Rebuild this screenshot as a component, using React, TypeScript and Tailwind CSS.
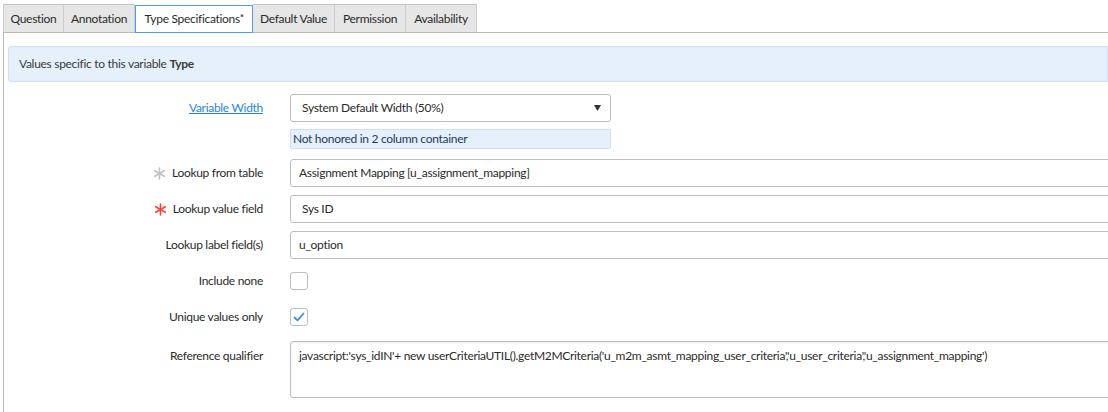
import React from "react";

const Tab = ({ label, w, active }: { label: React.ReactNode; w: string; active?: boolean }) => (
  <div
    className={
      active
        ? `${w} h-[28px] shrink-0 flex items-center justify-center bg-white border border-[#4c9ff0] text-[#2b2b2b] -mb-px relative z-10`
        : `${w} h-[28px] shrink-0 flex items-center justify-center bg-[#e6e6e6] border-r border-[#cccccc] border-t border-t-[#c4c4c4] text-[#2b2b2b]`
    }
  >
    {label}
  </div>
);

const Star = ({ color }: { color: string }) => (
  <svg width="13" height="13" viewBox="0 0 13 13" className="mr-[6px]">
    <g stroke={color} strokeWidth="1.6" strokeLinecap="round">
      <line x1="6.5" y1="1" x2="6.5" y2="12" />
      <line x1="1.7" y1="3.7" x2="11.3" y2="9.3" />
      <line x1="1.7" y1="9.3" x2="11.3" y2="3.7" />
    </g>
  </svg>
);

const Label = ({ children, star }: { children: React.ReactNode; star?: string }) => (
  <div className="w-[263px] shrink-0 flex items-center justify-end text-[12px] text-[#2b2b2b]">
    {star && <Star color={star} />}
    <span>{children}</span>
  </div>
);

const TextInput = ({ value, pl = "pl-[8px]" }: { value: string; pl?: string }) => (
  <div className={`w-[830px] shrink-0 h-[28px] border border-[#bdbdbd] rounded-[3px] flex items-center ${pl} text-[12px] text-[#2b2b2b] bg-white`}>
    {value}
  </div>
);

export default function App() {
  return (
    <div
      className="w-[1108px] h-[412px] overflow-hidden bg-white tracking-[-0.3px]"
      style={{ fontFamily: "Lato, 'Open Sans', sans-serif" }}
    >
      <div className="pt-[4px] pl-[3px]">
        {/* Tabs */}
        <div className="flex items-end text-[12px] border-b border-[#bbbbbb] h-[29px]">
          <Tab label="Question" w="w-[61px] border-l border-l-[#cccccc]" />
          <Tab label="Annotation" w="w-[71px]" />
          <Tab
            w="w-[118px]"
            active
            label={
              <span>
                Type Specifications<sup className="text-[9px] font-bold relative -top-[2px]">*</sup>
              </span>
            }
          />
          <Tab label="Default Value" w="w-[82px]" />
          <Tab label="Permission" w="w-[71px]" />
          <Tab label="Availability" w="w-[71px]" />
        </div>

        {/* Panel */}
        <div className="border-l border-[#bbbbbb] h-[400px] pl-[4px] pt-[13px]">
          <div className="h-[36px] bg-[#e6f0fa] border border-[#cde0f4] rounded-l-[3px] flex items-center pl-[10px] text-[12px] text-[#3a3a3a]">
            <span>
              Values specific to this variable <span className="font-bold">Type</span>
            </span>
          </div>

          <div className="-ml-[8px] pt-[12px] flex flex-col">
            {/* Variable Width */}
            <div className="flex items-center h-[28px]">
              <Label>
                <span className="text-[#1f84e0] underline">Variable Width</span>
              </Label>
              <div className="ml-[27px] shrink-0 w-[321px] h-[28px] border border-[#bdbdbd] rounded-[3px] flex items-center justify-between pl-[11px] pr-[9px] text-[12px] text-[#2b2b2b]">
                <span>System Default Width (50%)</span>
                <svg width="7" height="6" viewBox="0 0 7 6">
                  <polygon points="0,0 7,0 3.5,6" fill="#333" />
                </svg>
              </div>
            </div>
            <div className="flex mt-[7px]">
              <div className="w-[263px] shrink-0" />
              <div className="ml-[27px] shrink-0 w-[321px] h-[20px] bg-[#e6f0fa] border border-[#cde0f4] rounded-[2px] flex items-center pl-[2px] text-[12px] text-[#1c3a66]">
                Not honored in 2 column container
              </div>
            </div>

            <div className="flex items-center mt-[10px]">
              <Label star="#c0c0c0">Lookup from table</Label>
              <div className="ml-[27px] shrink-0">
                <TextInput value="Assignment Mapping [u_assignment_mapping]" />
              </div>
            </div>
            <div className="flex items-center mt-[8px]">
              <Label star="#ff4040">Lookup value field</Label>
              <div className="ml-[27px] shrink-0">
                <TextInput value="Sys ID" pl="pl-[11px]" />
              </div>
            </div>
            <div className="flex items-center mt-[8px]">
              <Label>Lookup label field(s)</Label>
              <div className="ml-[27px] shrink-0">
                <TextInput value="u_option" />
              </div>
            </div>

            <div className="flex items-center mt-[13px] h-[18px]">
              <Label>Include none</Label>
              <div className="ml-[27px] shrink-0 w-[18px] h-[18px] border border-[#bdbdbd] rounded-[3px] bg-white" />
            </div>
            <div className="flex items-center mt-[18px] h-[18px]">
              <Label>Unique values only</Label>
              <div className="ml-[27px] shrink-0 w-[18px] h-[18px] border border-[#bdbdbd] rounded-[3px] bg-white flex items-center justify-center">
                <svg width="12" height="10" viewBox="0 0 12 10">
                  <polyline points="1.5,5.5 4.5,8.3 10.5,1.5" fill="none" stroke="#3a8ef0" strokeWidth="1.8" strokeLinecap="round" strokeLinejoin="round" />
                </svg>
              </div>
            </div>

            <div className="flex items-start mt-[15px]">
              <div className="w-[263px] shrink-0 flex justify-end pt-[6px] text-[12px] text-[#2b2b2b]">Reference qualifier</div>
              <div className="ml-[27px] shrink-0 w-[830px] h-[57px] border border-[#bdbdbd] rounded-[3px] shadow-[inset_0_1px_2px_rgba(0,0,0,0.08)] pl-[8px] pt-[5px] text-[12px] text-[#2b2b2b]">
                javascript:'sys_idIN'+ new userCriteriaUTIL().getM2MCriteria('u_m2m_asmt_mapping_user_criteria','u_user_criteria','u_assignment_mapping')
              </div>
            </div>
          </div>
        </div>
      </div>
    </div>
  );
}
